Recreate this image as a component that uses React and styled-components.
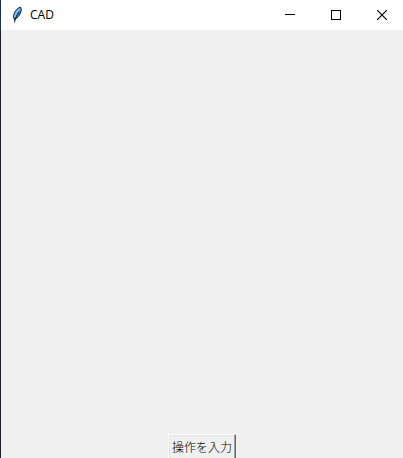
import React from 'react';
import styled, { createGlobalStyle } from 'styled-components';

const GlobalStyle = createGlobalStyle`
  * {
    box-sizing: border-box;
  }

  body {
    margin: 0;
    overflow: hidden;
  }
`;

const Desktop = styled.div`
  display: flex;
  height: 100vh;
  padding-left: 1px;
  background: linear-gradient(#1c2b50 0, #24355c 28px, #1c2026 32px, #1f2126 100%);
`;

const Window = styled.main`
  flex: 1;
  min-width: 0;
  display: flex;
  flex-direction: column;
  overflow: hidden;
  background: #f0f0f0;
`;

const TitleBar = styled.header`
  display: flex;
  align-items: center;
  height: 30px;
  padding-left: 8px;
  background: #fff;
`;

const Title = styled.h1`
  flex: 1;
  margin: 0;
  padding-left: 4px;
  font-family: 'Open Sans', 'Noto Sans', sans-serif;
  font-weight: 400;
  font-size: 12px;
  line-height: 16px;
  color: #000;
`;

const Controls = styled.div`
  display: flex;
  margin-right: -2px;
`;

const ControlButton = styled.button`
  display: flex;
  align-items: center;
  justify-content: center;
  width: 46px;
  height: 28px;
  padding: 0;
  border: 0;
  background: transparent;
  color: #000;

  &:hover {
    background: ${(props) => (props.$danger ? '#e81123' : '#e5e5e5')};
  }
`;

const Canvas = styled.div`
  flex: 1;
  min-height: 0;
`;

const Actions = styled.div`
  display: flex;
  justify-content: center;
  margin-bottom: -2px;
`;

const PushButton = styled.button`
  height: 26px;
  padding: 0 3px;
  border: 1px solid;
  border-color: #fff #696969 #696969 #fff;
  box-shadow: inset -1px -1px #a0a0a0, inset 1px 1px #e3e3e3;
  background: #f0f0f0;
  font-family: 'Noto Sans CJK JP', sans-serif;
  font-weight: 300;
  font-size: 12px;
  line-height: 16px;
  color: #000;
`;

const Feather = () => (
  <svg width='17' height='18' viewBox='0 0 17 18' aria-hidden='true'>
    <path
      d='M11.500 1C8.500 2 5 5.500 4.600 9.500c-.1 1.700.2 3 .8 4.300C8.200 12.800 11 9 12 5.800c.4-2 .2-3.800-.5-4.800z'
      fill='#3f8fe0'
      stroke='#23282f'
      strokeWidth='1'
    />
    <path d='M10.800 2.800C8.500 4.500 6.300 7.800 5.800 11' fill='none' stroke='#8cc6fb' strokeWidth='1.500' />
    <path d='M10.200 6C8 9.500 6 12 5.500 16.500' fill='none' stroke='#111418' strokeWidth='1' />
  </svg>
);

const App = () => {
  return (
    <>
      <GlobalStyle />
      <Desktop>
        <Window>
          <TitleBar>
            <Feather />
            <Title>CAD</Title>
            <Controls>
              <ControlButton type='button' aria-label='最小化'>
                <svg width='10' height='10' shapeRendering='crispEdges'>
                  <path d='M0 4.500h10' stroke='currentColor' />
                </svg>
              </ControlButton>
              <ControlButton type='button' aria-label='最大化'>
                <svg width='10' height='10' shapeRendering='crispEdges'>
                  <path d='M.5.5h9v9h-9z' fill='none' stroke='currentColor' />
                </svg>
              </ControlButton>
              <ControlButton type='button' aria-label='閉じる' $danger>
                <svg width='10' height='10'>
                  <path d='M0 0l10 10M10 0L0 10' stroke='currentColor' strokeWidth='1.200' />
                </svg>
              </ControlButton>
            </Controls>
          </TitleBar>
          <Canvas />
          <Actions>
            <PushButton type='button'>操作を入力</PushButton>
          </Actions>
        </Window>
      </Desktop>
    </>
  );
};

export default App;
